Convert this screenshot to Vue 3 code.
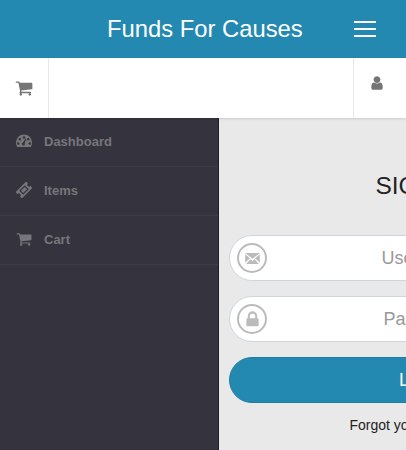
<script setup>
const menu = [
  { label: 'Dashboard', icon: 'dash' },
  { label: 'Items', icon: 'ticket' },
  { label: 'Cart', icon: 'cart' }
];
const cartPath = 'M704 1536q0 52-38 90t-90 38-90-38-38-90 38-90 90-38 90 38 38 90zm896 0q0 52-38 90t-90 38-90-38-38-90 38-90 90-38 90 38 38 90zm128-1088v512q0 24-16.5 42.5t-40.5 21.5l-1044 122q13 60 13 70 0 16-24 64h920q26 0 45 19t19 45-19 45-45 19h-1024q-26 0-45-19t-19-45q0-11 8-31.5t16-36 21.5-40 15.5-29.5l-177-823h-204q-26 0-45-19t-19-45 19-45 45-19h256q16 0 28.5 6.5t19.5 15.5 13 24.5 8 26 5.5 29.5 4.5 26h1201q26 0 45 19t19 45z';
</script>

<template>
  <div class="page">
    <header class="brand-bar">
      <div class="brand">Funds For Causes</div>
      <button class="burger" type="button" aria-label="Menu">
        <span></span><span></span><span></span>
      </button>
    </header>

    <div class="tool-bar">
      <div class="tool-left">
        <svg class="cart-icon" viewBox="0 0 1792 1792"><path :d="cartPath" /></svg>
      </div>
      <div class="tool-right">
        <svg class="user-icon" viewBox="0 0 1792 1792">
          <path d="M1536 1399q0 109-62.5 187t-150.5 78h-854q-88 0-150.5-78t-62.5-187q0-85 8.5-160.5t31.5-152 58.5-131 94-89 134.5-34.5q131 128 313 128t313-128q76 0 134.5 34.5t94 89 58.5 131 31.5 152 8.5 160.5zm-256-887q0 159-112.5 271.5t-271.5 112.5-271.5-112.5-112.5-271.5 112.5-271.5 271.5-112.5 271.5 112.5 112.5 271.5z" />
        </svg>
      </div>
    </div>

    <div class="body-row">
      <aside class="sidebar">
        <a v-for="item in menu" :key="item.label" class="menu-item">
          <svg v-if="item.icon === 'dash'" class="menu-icon" viewBox="0 0 16 16">
            <path fill-rule="evenodd" d="M8 1.500a8 8 0 0 1 8 8c0 1.700-.5 3.200-1.200 4.500H1.200C.5 12.700 0 11.200 0 9.500a8 8 0 0 1 8-8zM8 3.200a1.300 1.300 0 1 0 0 2.600 1.300 1.300 0 0 0 0-2.600zM3.800 5a1.300 1.300 0 1 0 0 2.600 1.300 1.300 0 0 0 0-2.600zM2.200 9.200a1.300 1.300 0 1 0 0 2.600 1.300 1.300 0 0 0 0-2.600zM13.800 9.200a1.300 1.300 0 1 0 0 2.600 1.300 1.300 0 0 0 0-2.600zM12.200 5a1.300 1.300 0 1 0 0 2.600 1.300 1.300 0 0 0 0-2.600zM9.600 5.600 7 9.400a1.500 1.500 0 1 0 1.700.7l1.700-4.300z" />
          </svg>
          <svg v-else-if="item.icon === 'ticket'" class="menu-icon" viewBox="0 0 16 16">
            <g transform="rotate(-45 8 8)">
              <path fill-rule="evenodd" d="M.5 3.500h15V6a2 2 0 0 0 0 4v2.500H.5V10a2 2 0 0 0 0-4zM4 5.200v5.600h8V5.200z" />
              <rect x="5.200" y="6.400" width="5.600" height="3.200" />
            </g>
          </svg>
          <svg v-else class="menu-icon" viewBox="0 0 1792 1792"><path :d="cartPath" /></svg>
          <span>{{ item.label }}</span>
        </a>
      </aside>

      <main class="content">
        <h1 class="title">SIGN IN</h1>
        <form class="login-form" @submit.prevent>
          <div class="field">
            <span class="field-icon">
              <svg viewBox="0 0 16 12" class="mail-icon">
                <path d="M0 0h16L8 6.300zM0 1.400v9.200L5.200 5.700zM16 1.400v9.200l-5.200-4.900zM1 12h14L10.200 6.900 8 8.700 5.800 6.900z" />
              </svg>
            </span>
            <input type="text" placeholder="Username" />
          </div>
          <div class="field">
            <span class="field-icon">
              <svg viewBox="0 0 1792 1792" class="lock-icon">
                <path d="M640 768h512v-192q0-106-75-181t-181-75-181 75-75 181v192zm832 96v576q0 40-28 68t-68 28h-960q-40 0-68-28t-28-68v-576q0-40 28-68t68-28h32v-192q0-184 132-316t316-132 316 132 132 316v192h32q40 0 68 28t28 68z" />
              </svg>
            </span>
            <input type="password" placeholder="Password" />
          </div>
          <button class="login-btn" type="submit">Login</button>
          <p class="forgot">Forgot your password?</p>
        </form>
      </main>
    </div>
  </div>
</template>

<style>
html, body {
  margin: 0;
  overflow: hidden;
}
</style>

<style scoped>
.page {
  width: 406px;
  height: 450px;
  overflow: hidden;
  font-family: "Liberation Sans", Arial, sans-serif;
  background: #e9e9e9;
}
.brand-bar {
  height: 58px;
  background: #2489b1;
  display: flex;
  align-items: center;
  padding-left: 107px;
  padding-right: 30px;
  justify-content: space-between;
  box-sizing: border-box;
}
.brand {
  color: #fff;
  font-size: 23.8px;
  line-height: 58px;
}
.burger {
  width: 22px;
  padding: 0;
  border: 0;
  background: none;
  display: flex;
  flex-direction: column;
  gap: 5px;
}
.burger span {
  display: block;
  height: 2px;
  background: #fff;
}
.tool-bar {
  height: 60px;
  background: #fff;
  display: flex;
  justify-content: space-between;
  box-shadow: 0 1px 2px rgba(0, 0, 0, 0.12);
  position: relative;
}
.tool-left {
  width: 48px;
  border-right: 1px solid #e7e7e7;
  display: flex;
  align-items: center;
  justify-content: center;
}
.tool-right {
  width: 53px;
  border-left: 1px solid #e7e7e7;
  display: flex;
  justify-content: center;
  padding-top: 17px;
  box-sizing: border-box;
  padding-right: 6px;
}
.cart-icon {
  width: 18px;
  height: 18px;
  fill: #757575;
}
.user-icon {
  width: 16px;
  height: 16px;
  fill: #757575;
}
.body-row {
  display: flex;
  height: 332px;
}
.sidebar {
  flex: 0 0 218px;
  background: #35333d;
  border-right: 1px solid #1f1e24;
}
.menu-item {
  height: 49px;
  box-sizing: border-box;
  border-bottom: 1px solid #3d3b46;
  display: flex;
  align-items: center;
  padding-left: 16px;
  padding-bottom: 2px;
  color: #77767b;
  font-size: 13px;
  font-weight: 700;
}
.menu-icon {
  width: 16px;
  height: 16px;
  fill: #77767b;
  margin-right: 12px;
  flex: none;
}
.content {
  flex: 0 0 404px;
  box-sizing: border-box;
  padding: 0 10px;
}
.title {
  margin: 54px 0 0;
  text-align: center;
  font-size: 24.5px;
  line-height: 28px;
  font-weight: 400;
  color: #222;
}
.login-form {
  margin-top: 35px;
}
.field {
  height: 46px;
  box-sizing: border-box;
  border: 1px solid #ccd6e0;
  border-radius: 23px;
  background: #fff;
  display: flex;
  align-items: center;
  margin-bottom: 15px;
  padding-left: 7px;
}
.field-icon {
  width: 30px;
  height: 30px;
  flex: none;
  box-sizing: border-box;
  border: 2px solid #bbb;
  border-radius: 50%;
  display: flex;
  align-items: center;
  justify-content: center;
}
.mail-icon {
  width: 15px;
  height: 11px;
  fill: #bbb;
}
.lock-icon {
  width: 19px;
  height: 19px;
  fill: #bbb;
}
.field input {
  flex: 1;
  min-width: 0;
  border: 0;
  outline: 0;
  background: none;
  text-align: center;
  font: 18px "Liberation Sans", Arial, sans-serif;
  padding: 0 33px 0 0;
}
.field input::placeholder {
  color: #999;
}
.login-btn {
  display: block;
  width: 100%;
  height: 46px;
  border: 1px solid #1f7da3;
  border-radius: 23px;
  background: #2489b1;
  color: #fff;
  font: 18px "Liberation Sans", Arial, sans-serif;
}
.forgot {
  margin: 12px 0 0;
  text-align: center;
  font-size: 14px;
  line-height: 20px;
  color: #222;
}
</style>
